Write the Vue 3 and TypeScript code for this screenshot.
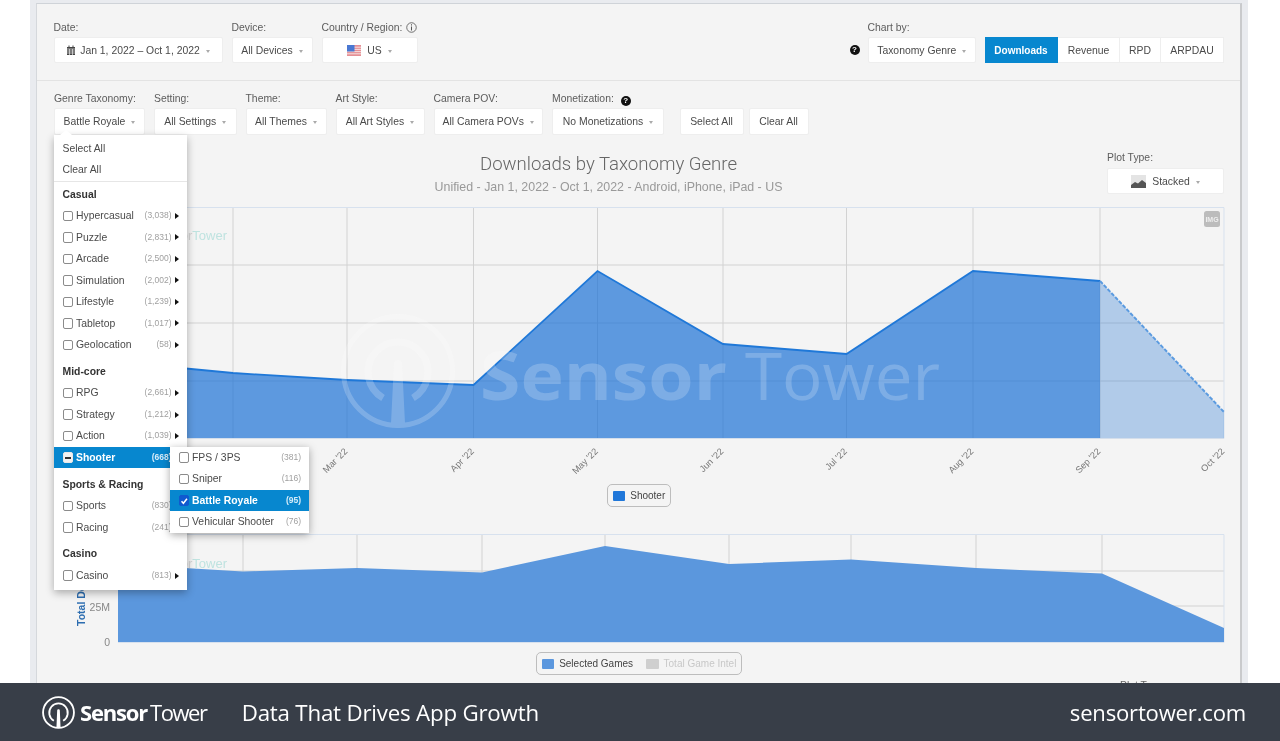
<script setup lang="ts">
interface Ctl { label: string; value: string; width: number; help?: boolean; open?: boolean }
interface Item { name: string; count: string; state?: 'mixed'; sub?: boolean }
interface Group { title: string; items: Item[] }
interface SubItem { name: string; count: string; checked?: boolean }

const filters: Ctl[] = [
  { label: 'Genre Taxonomy:', value: 'Battle Royale', width: 91, open: true },
  { label: 'Setting:', value: 'All Settings', width: 82.5 },
  { label: 'Theme:', value: 'All Themes', width: 81 },
  { label: 'Art Style:', value: 'All Art Styles', width: 89 },
  { label: 'Camera POV:', value: 'All Camera POVs', width: 109.5 },
  { label: 'Monetization:', value: 'No Monetizations', width: 112, help: true },
]
const metrics = [
  { name: 'Downloads', width: 73, active: true },
  { name: 'Revenue', width: 62 },
  { name: 'RPD', width: 41 },
  { name: 'ARPDAU', width: 63 },
]
const groups: Group[] = [
  { title: 'Casual', items: [
    { name: 'Hypercasual', count: '(3,038)' }, { name: 'Puzzle', count: '(2,831)' },
    { name: 'Arcade', count: '(2,500)' }, { name: 'Simulation', count: '(2,002)' },
    { name: 'Lifestyle', count: '(1,239)' }, { name: 'Tabletop', count: '(1,017)' },
    { name: 'Geolocation', count: '(58)' },
  ] },
  { title: 'Mid-core', items: [
    { name: 'RPG', count: '(2,661)' }, { name: 'Strategy', count: '(1,212)' },
    { name: 'Action', count: '(1,039)' }, { name: 'Shooter', count: '(668)', state: 'mixed', sub: true },
  ] },
  { title: 'Sports & Racing', items: [
    { name: 'Sports', count: '(830)' }, { name: 'Racing', count: '(241)' },
  ] },
  { title: 'Casino', items: [{ name: 'Casino', count: '(813)' }] },
]
const subItems: SubItem[] = [
  { name: 'FPS / 3PS', count: '(381)' },
  { name: 'Sniper', count: '(116)' },
  { name: 'Battle Royale', count: '(95)', checked: true },
  { name: 'Vehicular Shooter', count: '(76)' },
]

const mainX = [233, 347, 473.5, 597.5, 723, 846.5, 973, 1100]
const mainY = [265, 323, 381]
const ticks = [
  { t: "Feb '22", x: 233 }, { t: "Mar '22", x: 347 }, { t: "Apr '22", x: 473.5 },
  { t: "May '22", x: 597.5 }, { t: "Jun '22", x: 723 }, { t: "Jul '22", x: 846.5 },
  { t: "Aug '22", x: 973 }, { t: "Sep '22", x: 1100 }, { t: "Oct '22", x: 1224 },
]
const actual = '118,362 233,373 347,380 473.5,385 597.5,271 723,344 846.5,354 973,271 1100,281'
const lowerX = [243, 357, 482, 605, 729, 851, 976, 1102]
const lowerY = [571, 606]
const lower = '118,564 243,571.5 357,568 482,572.5 605,546 729,564 851,559.5 976,568 1102,573.5 1224,628'
</script>

<template>
  <div class="page">
    <main class="frame">
      <section class="panel">
        <div class="row-top">
          <div class="ctl">
            <span class="lab">Date:</span>
            <button class="btn date-btn">
              <svg class="cal" viewBox="0 0 10 10" width="10" height="10">
                <path fill="#444" d="M1 2h8v8H1zM2.5 .5h1v2h-1zM6.5 .5h1v2h-1z" />
                <path stroke="#fff" stroke-width=".6" d="M1 4h8M1 6h8M1 8h8M3.5 4v6M6.5 4v6" />
              </svg>
              Jan 1, 2022 – Oct 1, 2022<i class="caret"></i>
            </button>
          </div>
          <div class="ctl">
            <span class="lab">Device:</span>
            <button class="btn device-btn">All Devices<i class="caret"></i></button>
          </div>
          <div class="ctl">
            <span class="lab">Country / Region:
              <svg class="info" viewBox="0 0 12 12" width="11" height="11">
                <circle cx="6" cy="6" r="5.2" fill="none" stroke="#555" stroke-width=".9" />
                <path stroke="#555" stroke-width="1.1" d="M6 5v4.4M6 2.4v1.3" />
              </svg>
            </span>
            <button class="btn country-btn">
              <svg class="flag" viewBox="0 0 14 11" width="14" height="11">
                <rect width="14" height="11" fill="#e58f95" />
                <path stroke="#f6dede" stroke-width="1" d="M0 2.2h14M0 4.4h14M0 6.6h14M0 8.8h14" />
                <rect width="7.5" height="6.5" fill="#4a78d2" />
              </svg>
              US<i class="caret"></i>
            </button>
          </div>
          <div class="spacer"></div>
          <span class="help chart-help">?</span>
          <div class="ctl">
            <span class="lab">Chart by:</span>
            <button class="btn tax-btn">Taxonomy Genre<i class="caret"></i></button>
          </div>
          <div class="segs">
            <button
              v-for="m in metrics"
              :key="m.name"
              class="seg"
              :class="{ on: m.active }"
              :style="{ width: m.width + 'px' }"
            >{{ m.name }}</button>
          </div>
        </div>

        <div class="row-filters">
          <div v-for="f in filters" :key="f.label" class="ctl" :class="{ anchor: f.open }">
            <span class="lab">{{ f.label }}<span v-if="f.help" class="help mon-help">?</span></span>
            <button class="btn tall" :style="{ width: f.width + 'px' }">{{ f.value }}<i class="caret"></i></button>
            <div v-if="f.open" class="menu">
              <div class="opt">Select All</div>
              <div class="opt">Clear All</div>
              <div class="menu-rule"></div>
              <div v-for="g in groups" :key="g.title" class="grp">
                <div class="grp-title">{{ g.title }}</div>
                <div v-for="it in g.items" :key="it.name" class="item" :class="{ hot: it.state === 'mixed' }">
                  <span class="box" :class="{ mixed: it.state === 'mixed' }"></span>
                  <span class="name">{{ it.name }}</span>
                  <span class="count">{{ it.count }}</span>
                  <i class="arrow"></i>
                  <div v-if="it.sub" class="submenu">
                    <div v-for="s in subItems" :key="s.name" class="item sub-item" :class="{ hot: s.checked }">
                      <span class="box" :class="{ checked: s.checked }">
                        <svg v-if="s.checked" viewBox="0 0 10 10" width="10" height="10">
                          <path d="M1.8 5.2l2.2 2.4 4.2-5.2" fill="none" stroke="#fff" stroke-width="1.8" />
                        </svg>
                      </span>
                      <span class="name">{{ s.name }}</span>
                      <span class="count">{{ s.count }}</span>
                    </div>
                  </div>
                </div>
              </div>
            </div>
          </div>
          <button class="btn tall all-btn sel">Select All</button>
          <button class="btn tall all-btn clr">Clear All</button>
        </div>

        <div class="head">
          <div class="titles">
            <h1>Downloads by Taxonomy Genre</h1>
            <p>Unified - Jan 1, 2022 - Oct 1, 2022 - Android, iPhone, iPad - US</p>
          </div>
          <div class="ctl">
            <span class="lab">Plot Type:</span>
            <button class="btn plot-btn">
              <svg viewBox="0 0 15 13" width="15" height="13" class="plot-ico">
                <rect width="15" height="13" fill="#e4e4e4" />
                <path d="M0 10l4-3 3 1.5L11 5l4 3v5H0z" fill="#555" />
              </svg>
              Stacked<i class="caret"></i>
            </button>
          </div>
        </div>

        <svg class="chart" viewBox="37 200 1204 280" width="1204" height="280">
          <g class="grid">
            <line v-for="x in mainX" :key="x" :x1="x" :x2="x" y1="207" y2="438" />
            <line v-for="y in mainY" :key="y" x1="118" x2="1224" :y1="y" :y2="y" />
          </g>
          <path d="M118 207.5H1224V438.5" fill="none" stroke="#d7e1ee" />
          <polygon :points="actual + ' 1100,438 118,438'" fill="#1d72d6" opacity=".7" />
          <polygon points="1100,281 1224,412 1224,438 1100,438" fill="#2a78d6" opacity=".33" />
          <polyline :points="actual" fill="none" stroke="#1f78d8" stroke-width="1.8" />
          <polyline points="1100,281 1224,412" fill="none" stroke="#5b9be0" stroke-width="2" stroke-dasharray="4 1.5" />
          <line x1="118" x2="1224" y1="438.5" y2="438.5" stroke="#d4deeb" />
          <g class="wm" transform="translate(398 371)">
            <circle r="54.5" fill="none" stroke="#fff" stroke-width="5" />
            <path d="M-15 27A30 30 0 1 1 15 27" fill="none" stroke="#fff" stroke-width="7" />
            <path d="M-4-8C-4-12 4-12 4-8L7 53H-7Z" fill="#fff" />
          </g>
          <text class="wm wm-b" x="480" y="400" textLength="247" lengthAdjust="spacingAndGlyphs">Sensor</text>
          <text class="wm wm-r" x="745" y="400" textLength="195" lengthAdjust="spacingAndGlyphs">Tower</text>
          <text class="small-wm" x="227" y="240" text-anchor="end">Sensor<tspan class="teal">Tower</tspan></text>
          <rect x="1204" y="211" width="16" height="16" rx="2.5" fill="#bcbcbc" />
          <text class="img" x="1212" y="221.5" text-anchor="middle">IMG</text>
          <text
            v-for="t in ticks"
            :key="t.t"
            class="tick"
            :x="t.x + 1"
            :y="452"
            text-anchor="end"
            :transform="`rotate(-45 ${t.x + 1} 452)`"
          >{{ t.t }}</text>
        </svg>

        <div class="legend-row legend-one">
          <div class="legend">
            <span class="sw main-sw"></span><span>Shooter</span>
          </div>
        </div>

        <svg class="chart lower" viewBox="37 520 1204 130" width="1204" height="130">
          <g class="grid">
            <line v-for="x in lowerX" :key="x" :x1="x" :x2="x" y1="534" y2="642" />
            <line v-for="y in lowerY" :key="y" x1="118" x2="1224" :y1="y" :y2="y" />
          </g>
          <path d="M118 534.5H1224V642.5H118" fill="none" stroke="#d7e1ee" />
          <text class="small-wm" x="227" y="568" text-anchor="end">Sensor<tspan class="teal">Tower</tspan></text>
          <polygon :points="lower + ' 1224,642 118,642'" fill="#5b97dd" />
          <text class="yl" x="110" y="611" text-anchor="end">25M</text>
          <text class="yl" x="110" y="646" text-anchor="end">0</text>
          <text class="ytitle" x="85" y="626" transform="rotate(-90 85 626)">Total Downloads</text>
        </svg>

        <div class="legend-row legend-two">
          <div class="legend wide">
            <span class="sw low-sw"></span><span>Selected Games</span>
            <span class="sw off-sw"></span><span class="off">Total Game Intel</span>
          </div>
        </div>

        <div class="cut-label">Plot Type:</div>
      </section>
    </main>

    <footer class="foot">
      <div class="brand">
        <svg class="logo" viewBox="-34 -34 68 68" width="35" height="35">
          <circle r="30" fill="none" stroke="#fff" stroke-width="3.6" />
          <path d="M-9 16A18 18 0 1 1 9 16" fill="none" stroke="#fff" stroke-width="3.6" />
          <path d="M-2.6-4C-2.6-7 2.6-7 2.6-4L4 30H-4Z" fill="#fff" />
        </svg>
        <span class="b1">Sensor</span><span class="b2">Tower</span>
        <span class="tag">Data That Drives App Growth</span>
      </div>
      <span class="site">sensortower.com</span>
    </footer>
  </div>
</template>

<style>
html, body { margin: 0; background: #fff; }
</style>

<style scoped>
.page {
  width: 1280px;
  height: 741px;
  display: flex;
  flex-direction: column;
  overflow: hidden;
  font-family: "Liberation Sans", Arial, sans-serif;
  font-size: 10.4px;
  color: #4a4a4a;
  background: #fff;
  filter: blur(.35px);
}
.frame {
  height: 683px;
  margin: 0 32px 0 30px;
  padding: 3px 6px 0;
  background: #e9ebef;
  overflow: hidden;
  flex: none;
  box-sizing: border-box;
}
.panel {
  height: 690px;
  background: #f4f4f4;
  border-top: 1px solid #cfd3d8;
  border-left: 1px solid #d5d8dc;
  border-right: 2px solid #c9cacc;
  box-sizing: border-box;
}
.row-top {
  display: flex;
  align-items: flex-end;
  gap: 9px;
  padding: 17px 16px 17px 16.5px;
  border-bottom: 1px solid #e3e3e3;
}
.spacer { flex: 1; }
.ctl { display: flex; flex-direction: column; }
.anchor { position: relative; }
.lab {
  height: 14px;
  line-height: 14px;
  margin-bottom: 2px;
  color: #5c5c5c;
  white-space: nowrap;
}
.info { vertical-align: -2px; margin-left: 1px; }
.btn {
  display: flex;
  align-items: center;
  justify-content: center;
  height: 26px;
  padding: 0;
  font: inherit;
  color: #4a4a4a;
  background: #fff;
  border: 1px solid #eee;
  border-radius: 2px;
  white-space: nowrap;
  box-sizing: border-box;
}
.tall { height: 27px; padding-bottom: 1px; }
.caret {
  width: 0;
  height: 0;
  margin-left: 6px;
  margin-top: 2px;
  border-left: 2.5px solid transparent;
  border-right: 2.5px solid transparent;
  border-top: 3px solid #aaa;
}
.date-btn { width: 169px; }
.cal { margin-right: 4px; }
.device-btn { width: 81px; }
.country-btn { width: 96px; }
.flag { margin-right: 6px; }
.tax-btn { width: 108.5px; }
.help {
  display: inline-flex;
  align-items: center;
  justify-content: center;
  width: 10px;
  height: 10px;
  border-radius: 50%;
  background: #111;
  color: #fff;
  font-size: 8px;
  font-weight: 700;
  line-height: 1;
}
.chart-help { margin-bottom: 8px; margin-right: -1px; }
.mon-help { margin-left: 7px; vertical-align: -1px; }
.segs { display: flex; }
.seg {
  height: 26px;
  padding: 0;
  font: inherit;
  color: #4a4a4a;
  background: #fff;
  border: 1px solid #eee;
  border-left: none;
  box-sizing: border-box;
}
.seg.on {
  background: #0787cf;
  border-color: #0787cf;
  color: #fff;
  font-weight: 700;
  font-size: 10px;
}
.row-filters {
  display: flex;
  align-items: flex-end;
  gap: 9px;
  padding: 11px 16px 0 17px;
}
.all-btn { flex: none; }
.sel { width: 64px; margin-left: 6.5px; }
.clr { width: 60px; margin-left: -4px; }

.menu {
  position: absolute;
  top: 43px;
  left: 0;
  z-index: 5;
  width: 132.5px;
  padding: 2.6px 0 3.4px;
  background: #fff;
  box-shadow: 0 3px 8px rgba(0, 0, 0, .3);
  box-sizing: border-box;
}
.menu::before {
  content: "";
  position: absolute;
  top: -5px;
  left: 6px;
  border-left: 6px solid transparent;
  border-right: 6px solid transparent;
  border-bottom: 5px solid #fff;
}
.opt, .grp-title, .item {
  height: 21.5px;
  line-height: 21.5px;
  white-space: nowrap;
}
.opt { padding-left: 8.5px; }
.menu-rule { height: 1px; margin: 0 0 2px; background: #e6e6e6; }
.grp + .grp { margin-top: 5.25px; }
.grp-title { padding-left: 8.5px; font-weight: 700; color: #333; }
.item {
  position: relative;
  display: flex;
  align-items: center;
  padding: 0 8px 0 8.5px;
  box-sizing: border-box;
}
.box {
  flex: none;
  display: inline-flex;
  align-items: center;
  justify-content: center;
  width: 10.5px;
  height: 10.5px;
  margin-right: 3px;
  background: #fff;
  border: 1px solid #8b8b8b;
  border-radius: 2px;
  box-sizing: border-box;
}
.box.mixed { border-color: #e8e8e8; background: #f2f2f2; position: relative; }
.box.mixed::after {
  content: "";
  width: 6px;
  height: 2px;
  background: #333;
}
.box.checked { background: #1059cf; border-color: #1059cf; }
.name { flex: 1; }
.count { font-size: 8.5px; color: #a0a0a0; }
.arrow {
  margin-left: 3px;
  border-top: 3px solid transparent;
  border-bottom: 3px solid transparent;
  border-left: 4px solid #111;
}
.hot { background: #0787cf; color: #fff; font-weight: 700; }
.hot > .count { color: #d6ecf9; }
.hot > .arrow { border-left-color: #fff; }
.submenu {
  position: absolute;
  top: 0;
  left: 116px;
  z-index: 6;
  width: 139px;
  background: #fff;
  color: #4a4a4a;
  font-weight: 400;
  box-shadow: 0 2px 8px rgba(0, 0, 0, .35);
}
.sub-item { padding: 0 8px 0 8.5px; }
.sub-item.hot { color: #fff; font-weight: 700; }

.head {
  display: flex;
  align-items: flex-start;
  height: 65px;
  padding: 16px 16px 0 17px;
  box-sizing: border-box;
}
.titles {
  flex: 1;
  padding: 2px 0 0 56px;
  text-align: center;
}
.titles h1 {
  margin: 0;
  font-family: Roboto, "Liberation Sans", sans-serif;
  font-size: 18.6px;
  line-height: 22px;
  font-weight: 300;
  color: #666;
}
.titles p {
  margin: 3px 0 0;
  font-size: 12.4px;
  line-height: 18px;
  color: #999;
}
.head .lab { margin-bottom: 3px; }
.plot-btn { width: 117px; }
.plot-ico { margin-right: 6px; }

.chart { display: block; }
.grid line { stroke: #d2d2d2; stroke-width: 1; }
.wm { opacity: .2; }
.wm-b, .wm-r { fill: #fff; font-family: "Open Sans", sans-serif; font-size: 66px; }
.wm-b { font-weight: 700; }
.small-wm { font-size: 13px; fill: #d4d4d4; }
.teal { fill: #bfe3e0; }
.img { font-size: 7px; font-weight: 700; fill: #eee; }
.tick { font-size: 9.2px; fill: #777; }
.yl { font-size: 10.5px; fill: #888; }
.ytitle { font-size: 10.5px; font-weight: 700; fill: #2c6db0; }

.legend-row { display: flex; justify-content: center; }
.legend-one { height: 40px; padding-top: 4px; box-sizing: border-box; padding-left: 1px; }
.legend-two { height: 30px; padding-top: 2px; box-sizing: border-box; padding-left: 1px; }
.legend {
  display: flex;
  align-items: center;
  height: 23px;
  padding: 0 5px;
  border: 1px solid #bdbdbd;
  border-radius: 5px;
  box-sizing: border-box;
  color: #444;
  font-size: 10px;
}
.wide { padding: 0 5px; }
.sw { width: 12.5px; height: 10px; border-radius: 1px; margin-right: 5px; }
.main-sw { background: #2077d9; }
.low-sw { background: #5b97de; }
.off-sw { background: #cfcfcf; margin-left: 13px; }
.off { color: #c8c8c8; }
.cut-label { padding-left: 1083px; line-height: 12px; color: #666; }

.foot {
  flex: none;
  height: 58px;
  position: relative;
  z-index: 10;
  display: flex;
  align-items: center;
  justify-content: space-between;
  padding: 0 34px 0 41px;
  background: #383e48;
  color: #fff;
  font-family: "Open Sans", "Noto Sans", sans-serif;
}
.brand { display: flex; align-items: center; }
.logo { margin-right: 4px; }
.b1 { font-size: 22px; font-weight: 700; letter-spacing: -1.2px; }
.b2 { margin-left: 3px; font-size: 22px; letter-spacing: -1.4px; }
.tag { margin-left: 35px; font-size: 22.3px; letter-spacing: -.2px; }
.site { font-size: 22.1px; letter-spacing: -.2px; }
</style>
